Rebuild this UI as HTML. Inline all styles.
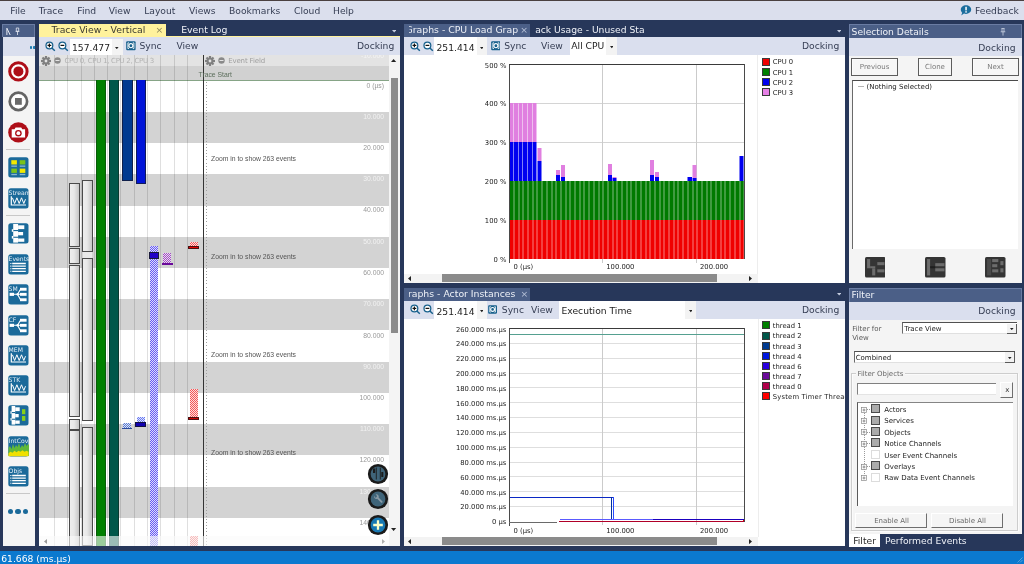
<!DOCTYPE html>
<html><head><meta charset="utf-8"><title>Trace</title>
<style>
*{margin:0;padding:0;box-sizing:border-box}
html,body{width:1024px;height:564px;overflow:hidden}
body{background:#27375a;position:relative;font-family:"DejaVu Sans","Liberation Sans",sans-serif;font-size:9.1px;color:#2e3440}
div,span,svg{position:absolute}
#root{left:0;top:0;width:1024px;height:564px;will-change:transform;overflow:hidden}
span{white-space:nowrap;line-height:1}
.t9{font-size:9.2px;color:#363e54}
.tw{font-size:9.2px;color:#eef1f7}
.t7{font-size:7px;color:#222}
.t7s{font-size:6.8px;color:#222}
.t7g{font-size:7px;color:#9a9a9a}
.ar{font-family:"Liberation Sans",sans-serif;font-size:6.8px;color:#555}
.tl{font-family:"Liberation Sans",sans-serif;font-size:6.8px;color:#999}
.tlw{font-family:"Liberation Sans",sans-serif;font-size:6.8px;color:#f2f2f2}
.tab{font-size:9.32px}
.btn{font-size:7px;color:#7a7a7a;text-align:center}
</style></head>
<body>
<div id="root">
<!-- p_top -->
<div style="left:0px;top:0px;width:1024px;height:1px;background:#4a4040;"></div>
<div style="left:0px;top:1px;width:1024px;height:18.5px;background:#dbdfed;"></div>
<span class="t9" style="left:10.3px;top:5.9px;">File</span>
<span class="t9" style="left:38.7px;top:5.9px;">Trace</span>
<span class="t9" style="left:77.3px;top:5.9px;">Find</span>
<span class="t9" style="left:108.7px;top:5.9px;">View</span>
<span class="t9" style="left:144.2px;top:5.9px;">Layout</span>
<span class="t9" style="left:189px;top:5.9px;">Views</span>
<span class="t9" style="left:229px;top:5.9px;">Bookmarks</span>
<span class="t9" style="left:294px;top:5.9px;">Cloud</span>
<span class="t9" style="left:333px;top:5.9px;">Help</span>
<svg style="left:960px;top:5px" width="12" height="11" viewBox="0 0 12 11"><path d="M6 0.3C8.9 0.3 11.2 2.2 11.2 4.6S8.9 8.9 6 8.9c-.7 0-1.4-.1-2-.3L1.2 10.4l1-2.6C1.300 7 .8 5.900 .8 4.600 .8 2.200 3.100 .3 6 .3z" fill="#1b6e9e"/><rect x="5.3" y="1.800" width="1.500" height="3.600" fill="#fff"/><rect x="5.300" y="6.200" width="1.500" height="1.400" fill="#fff"/></svg><span class="t9" style="left:975px;top:5.9px;">Feedback</span>
<div style="left:0px;top:550.5px;width:1024px;height:13.5px;background:#0b79cf;"></div>
<span class="tw" style="left:1.2px;top:553.9px;color:#fff">61.668 (ms.µs)</span>
<svg style="left:1016px;top:556px" width="7" height="7" viewBox="0 0 7 7"><path d="M6.500 1.500L1.500 6.500M6.500 4L4 6.500" stroke="#6aa8dc" stroke-width=".8"/></svg><!-- p_left -->
<div style="left:3px;top:24.3px;width:32.1px;height:522px;background:#f4f4f4;"></div>
<div style="left:3px;top:30px;width:32.1px;height:26px;background:#dadfee;"></div>
<div style="left:2.2px;top:24.3px;width:33px;height:13px;background:#4b5f87;border:1px solid #6a7ca3;border-bottom:none"></div>
<svg style="left:5.8px;top:27px" width="16" height="9" viewBox="0 0 16 9"><path d="M.9 8V1.200L4.200 8" stroke="#e6eaf3" stroke-width="1" fill="none"/><path d="M10.300 1h2.400v3.300h-2.400zM9.600 4.400h3.800M11.500 4.400V8" stroke="#e6eaf3" stroke-width=".8" fill="none"/></svg>
<div style="left:30px;top:46.3px;width:2.3px;height:2.3px;background:#1b7ab0;border-radius:0.8px"></div>
<div style="left:33.4px;top:46.3px;width:1.8px;height:2.3px;background:#1b7ab0;border-radius:0.8px 0 0 0.8px"></div>
<svg style="left:7px;top:60px" width="23" height="23" viewBox="0 0 23 23"><circle cx="11.400" cy="11.400" r="8.700" fill="#fff" stroke="#ae0f18" stroke-width="3"/><circle cx="11.400" cy="11.400" r="5" fill="#ae0f18"/></svg>
<svg style="left:7px;top:90px" width="23" height="23" viewBox="0 0 23 23"><circle cx="11.400" cy="11.400" r="8.700" fill="#fff" stroke="#646464" stroke-width="2.700"/><rect x="8" y="8" width="6.800" height="6.800" fill="#6a6a6a"/></svg>
<svg style="left:7px;top:120.500px" width="23" height="23" viewBox="0 0 23 23"><circle cx="11.400" cy="11.400" r="10.200" fill="#ae0f18"/><path d="M4.700 8.200h2.800l1.100-1.700h5.600l1.100 1.700h2.800v8.300h-13.400z" fill="#fff"/><circle cx="11.400" cy="12.200" r="3.300" fill="#ae0f18"/><circle cx="11.400" cy="12.200" r="1.900" fill="#fff"/></svg>
<div style="left:5.5px;top:149.2px;width:24.5px;height:0.8px;background:#c8c8c8;"></div>
<svg style="left:8px;top:157px" width="21" height="21" viewBox="0 0 21 21"><rect x="0.3" y="0.3" width="20.2" height="20.2" rx="2.5" fill="#1b6a9a"/><rect x="3.3" y="3.2" width="5.600" height="4.300" fill="#f2e800"/><rect x="3.3" y="8.5" width="5.600" height="1.300" fill="#8ab6d0"/><rect x="11.7" y="3.2" width="5.600" height="4.300" fill="#7ac21a"/><rect x="11.7" y="8.5" width="5.600" height="1.300" fill="#8ab6d0"/><rect x="3.3" y="11.6" width="5.600" height="4.300" fill="#7ac21a"/><rect x="3.3" y="16.9" width="5.600" height="1.300" fill="#8ab6d0"/><rect x="11.7" y="11.6" width="5.600" height="4.300" fill="#f2e800"/><rect x="11.7" y="16.9" width="5.600" height="1.300" fill="#8ab6d0"/></svg>
<svg style="left:8px;top:188px" width="21" height="21" viewBox="0 0 21 21"><rect x="0.3" y="0.3" width="20.2" height="20.2" rx="2.5" fill="#1b6a9a"/><path d="M3.300 8.200V17H18" stroke="#fff" stroke-width="1.200" fill="none"/><path d="M4.400 9.800l2.200 5.700 2.300-5.700 2.300 5.700 2.300-5.700 2.300 5.700 1.700-4.300" stroke="#fff" stroke-width="1" fill="none"/><text x="0.6" y="6.5" font-family="DejaVu Sans, sans-serif" font-size="6.1" fill="#e4eef6">Stream</text></svg>
<div style="left:5.5px;top:215.2px;width:24.5px;height:0.8px;background:#c8c8c8;"></div>
<svg style="left:8px;top:223px" width="21" height="21" viewBox="0 0 21 21"><rect x="0.3" y="0.3" width="20.2" height="20.2" rx="2.5" fill="#1b6a9a"/><rect x="5.200" y="1" width="4.900" height="18.600" fill="#fff"/><rect x="10.100" y="2.300" width="6.200" height="3.800" fill="#fff"/><rect x="10.100" y="9" width="5" height="3.300" fill="#fff"/><rect x="10.100" y="15.500" width="6.200" height="3.300" fill="#fff"/><rect x="5.200" y="7" width="4.900" height="1.100" fill="#1b6a9a"/><rect x="5.200" y="13.700" width="4.900" height="1.100" fill="#1b6a9a"/><rect x="3.800" y="6.200" width="1.400" height="2.600" fill="#fff"/><rect x="3.800" y="13" width="1.400" height="2.600" fill="#fff"/></svg>
<svg style="left:8px;top:253.5px" width="21" height="21" viewBox="0 0 21 21"><rect x="0.3" y="0.3" width="20.2" height="20.2" rx="2.5" fill="#1b6a9a"/><path d="M4.200 9.500h13.600M4.200 12.100h13.600M4.200 14.700h13.600M4.200 17.300h13.600" stroke="#fff" stroke-width="1.300"/><path d="M2.300 9.500h1.100M2.300 12.100h1.100M2.300 14.700h1.100M2.300 17.300h1.100" stroke="#fff" stroke-width="1.100"/><text x="0.6" y="6.5" font-family="DejaVu Sans, sans-serif" font-size="6.1" fill="#e4eef6">Events</text></svg>
<svg style="left:8px;top:284px" width="21" height="21" viewBox="0 0 21 21"><rect x="0.3" y="0.3" width="20.2" height="20.2" rx="2.5" fill="#1b6a9a"/><path d="M5.900 10.300h3.200M9.500 10.300L12.500 5.300M9.500 10.300h3M9.500 10.300L12.500 15.700" stroke="#fff" stroke-width="1.100" fill="none"/><circle cx="9.700" cy="10.300" r="1.300" fill="#fff"/><rect x="12" y="3.800" width="6.600" height="2.900" fill="#fff"/><rect x="12" y="8.900" width="6.600" height="2.900" fill="#fff"/><rect x="12" y="14.300" width="6.600" height="2.900" fill="#fff"/><rect x="1.600" y="8.800" width="4.400" height="3.100" fill="#fff"/><text x="0.6" y="6.5" font-family="DejaVu Sans, sans-serif" font-size="6.1" fill="#e4eef6">SM</text></svg>
<svg style="left:8px;top:314.5px" width="21" height="21" viewBox="0 0 21 21"><rect x="0.3" y="0.3" width="20.2" height="20.2" rx="2.5" fill="#1b6a9a"/><path d="M5.900 10.300h3.200M9.500 10.300L12.500 5.300M9.500 10.300h3M9.500 10.300L12.500 15.700" stroke="#fff" stroke-width="1.100" fill="none"/><circle cx="9.700" cy="10.300" r="1.300" fill="#fff"/><rect x="12" y="3.800" width="6.600" height="2.900" fill="#fff"/><rect x="12" y="8.900" width="6.600" height="2.900" fill="#fff"/><rect x="12" y="14.300" width="6.600" height="2.900" fill="#fff"/><rect x="1.600" y="8.800" width="4.400" height="3.100" fill="#fff"/><text x="0.6" y="6.5" font-family="DejaVu Sans, sans-serif" font-size="6.1" fill="#e4eef6">CF</text></svg>
<svg style="left:8px;top:344.5px" width="21" height="21" viewBox="0 0 21 21"><rect x="0.3" y="0.3" width="20.2" height="20.2" rx="2.5" fill="#1b6a9a"/><path d="M3.300 8.200V17H18" stroke="#fff" stroke-width="1.200" fill="none"/><path d="M4.400 9.800l2.200 5.700 2.300-5.700 2.300 5.700 2.300-5.700 2.300 5.700 1.700-4.300" stroke="#fff" stroke-width="1" fill="none"/><text x="0.6" y="6.5" font-family="DejaVu Sans, sans-serif" font-size="6.1" fill="#e4eef6">MEM</text></svg>
<svg style="left:8px;top:375px" width="21" height="21" viewBox="0 0 21 21"><rect x="0.3" y="0.3" width="20.2" height="20.2" rx="2.5" fill="#1b6a9a"/><path d="M3.300 8.200V17H18" stroke="#fff" stroke-width="1.200" fill="none"/><path d="M4.400 9.800l2.200 5.700 2.300-5.700 2.300 5.700 2.300-5.700 2.300 5.700 1.700-4.300" stroke="#fff" stroke-width="1" fill="none"/><text x="0.6" y="6.5" font-family="DejaVu Sans, sans-serif" font-size="6.1" fill="#e4eef6">STK</text></svg>
<svg style="left:8px;top:405px" width="21" height="21" viewBox="0 0 21 21"><rect x="0.3" y="0.3" width="20.2" height="20.2" rx="2.5" fill="#1b6a9a"/><rect x="3.600" y="1" width="3.600" height="18.600" fill="#fff"/><rect x="7.200" y="2.300" width="4.500" height="3.800" fill="#fff"/><rect x="7.200" y="9" width="3.500" height="3.300" fill="#fff"/><rect x="7.200" y="15.500" width="4.500" height="3.300" fill="#fff"/><rect x="3.600" y="7" width="3.600" height="1.100" fill="#1b6a9a"/><rect x="3.600" y="13.700" width="3.600" height="1.100" fill="#1b6a9a"/><rect x="2.500" y="6.200" width="1.100" height="2.600" fill="#fff"/><rect x="2.500" y="13" width="1.100" height="2.600" fill="#fff"/><rect x="14" y="4.200" width="3.300" height="5" fill="#8ad018"/><rect x="14" y="11" width="3.300" height="4.800" fill="#8ad018"/></svg>
<svg style="left:8px;top:435.5px" width="21" height="21" viewBox="0 0 21 21"><rect x="0.3" y="0.3" width="20.2" height="20.2" rx="2.5" fill="#1b6a9a"/><path d="M.5 20V12l1.500-2 1.500 3 1.500-5 1.500 4 1.500-3 1.500 2 1.500-4 1.500 5 1.500-3 1.500 2 1.500-4 1.500 3 1.500-2 1 1V20z" fill="#5fb83a"/><path d="M.5 20.200v-3l2-1.500 2 1 2-2 2 1.500 2-1.500 2 1 2-1.500 2 1.500 2-1 2 1v4.500z" fill="#f0e000"/><text x="0.6" y="6.5" font-family="DejaVu Sans, sans-serif" font-size="6.1" fill="#e4eef6">IntCov</text></svg>
<svg style="left:8px;top:466px" width="21" height="21" viewBox="0 0 21 21"><rect x="0.3" y="0.3" width="20.2" height="20.2" rx="2.5" fill="#1b6a9a"/><path d="M4.200 9.500h13.600M4.200 12.100h13.600M4.200 14.700h13.600M4.200 17.300h13.600" stroke="#fff" stroke-width="1.300"/><path d="M2.300 9.500h1.100M2.300 12.100h1.100M2.300 14.700h1.100M2.300 17.300h1.100" stroke="#fff" stroke-width="1.100"/><text x="0.6" y="6.5" font-family="DejaVu Sans, sans-serif" font-size="6.1" fill="#e4eef6">Objs</text></svg>
<div style="left:5.5px;top:493.2px;width:24.5px;height:0.8px;background:#c8c8c8;"></div>
<div style="left:7.9px;top:508.7px;width:5.2px;height:5.2px;background:#1b6a9a;border-radius:50%"></div>
<div style="left:15.4px;top:508.7px;width:5.2px;height:5.2px;background:#1b6a9a;border-radius:50%"></div>
<div style="left:22.9px;top:508.7px;width:5.2px;height:5.2px;background:#1b6a9a;border-radius:50%"></div>
<!-- p_trace -->
<div style="left:39px;top:24px;width:126.8px;height:12.5px;background:#fff29c;"></div>
<span class="t9 tab" style="left:51.5px;top:24.84px;color:#3a3a30">Trace View - Vertical</span>
<span class="t9" style="left:155.6px;top:24.9px;color:#8a845a;font-size:9.2px">×</span>
<span class="tw tab" style="left:181.2px;top:24.84px;">Event Log</span>
<svg style="left:392px;top:30.2px" width="4.4" height="2.6" viewBox="0 0 4.4 2.6"><path d="M0 0h4.4L2.2 2.6z" fill="#c5cde0"/></svg>
<div style="left:39px;top:36px;width:361.2px;height:1.1px;background:#fff29c;"></div>
<div style="left:39px;top:54px;width:350px;height:492.3px;background:#fff;overflow:hidden;"><div style="left:0px;top:0px;width:350px;height:12.3px;background:#e3e3e3;"></div>
<div style="left:0px;top:12.3px;width:350px;height:13.8px;background:#d1d1d1;"></div>
<div style="left:0px;top:26px;width:350px;height:466.3px;background:#fff;"></div>
<div style="left:0px;top:57.92px;width:350px;height:31.22px;background:#d3d3d3;"></div>
<div style="left:0px;top:120.36px;width:350px;height:31.22px;background:#d3d3d3;"></div>
<div style="left:0px;top:182.8px;width:350px;height:31.22px;background:#d3d3d3;"></div>
<div style="left:0px;top:245.24px;width:350px;height:31.22px;background:#d3d3d3;"></div>
<div style="left:0px;top:307.68px;width:350px;height:31.22px;background:#d3d3d3;"></div>
<div style="left:0px;top:370.12px;width:350px;height:31.22px;background:#d3d3d3;"></div>
<div style="left:0px;top:432.56px;width:350px;height:31.22px;background:#d3d3d3;"></div>
<div style="left:0px;top:26px;width:350px;height:1px;background:#86a486;"></div>
<span class="tlw" style="right:5px;top:-1px;color:#f4f4f4">-10.000</span><span class="tl" style="right:5px;top:29.1px">0 (µs)</span>
<span class="tlw" style="right:5px;top:60.1px">10.000</span>
<span class="tl" style="right:5px;top:91.1px">20.000</span>
<span class="tlw" style="right:5px;top:122.1px">30.000</span>
<span class="tl" style="right:5px;top:153.1px">40.000</span>
<span class="tlw" style="right:5px;top:185.1px">50.000</span>
<span class="tl" style="right:5px;top:216.1px">60.000</span>
<span class="tlw" style="right:5px;top:247.1px">70.000</span>
<span class="tl" style="right:5px;top:279.1px">80.000</span>
<span class="tlw" style="right:5px;top:310.1px">90.000</span>
<span class="tl" style="right:5px;top:341.1px">100.000</span>
<span class="tlw" style="right:5px;top:372.1px">110.000</span>
<span class="tl" style="right:5px;top:403.1px">120.000</span>
<span class="tlw" style="right:5px;top:435.1px">130.000</span>
<span class="tl" style="right:5px;top:466.1px">140.000</span>
<div style="left:15.0px;top:0px;width:0.9px;height:492.29999999999995px;background:rgba(0,0,0,0.125);"></div>
<div style="left:28.28px;top:0px;width:0.9px;height:492.29999999999995px;background:rgba(0,0,0,0.125);"></div>
<div style="left:41.56px;top:0px;width:0.9px;height:492.29999999999995px;background:rgba(0,0,0,0.125);"></div>
<div style="left:54.84px;top:0px;width:0.9px;height:492.29999999999995px;background:rgba(0,0,0,0.125);"></div>
<div style="left:68.12px;top:0px;width:0.9px;height:492.29999999999995px;background:rgba(0,0,0,0.125);"></div>
<div style="left:81.4px;top:0px;width:0.9px;height:492.29999999999995px;background:rgba(0,0,0,0.125);"></div>
<div style="left:94.68px;top:0px;width:0.9px;height:492.29999999999995px;background:rgba(0,0,0,0.125);"></div>
<div style="left:107.96px;top:0px;width:0.9px;height:492.29999999999995px;background:rgba(0,0,0,0.125);"></div>
<div style="left:121.24px;top:0px;width:0.9px;height:492.29999999999995px;background:rgba(0,0,0,0.125);"></div>
<div style="left:134.52px;top:0px;width:0.9px;height:492.29999999999995px;background:rgba(0,0,0,0.125);"></div>
<div style="left:147.8px;top:0px;width:0.9px;height:492.29999999999995px;background:rgba(0,0,0,0.125);"></div>
<div style="left:56.7px;top:26px;width:10.3px;height:466.29999999999995px;background:#008000;border-left:0.6px solid #0a5a0a;border-right:0.6px solid #0a5a0a"></div>
<div style="left:70.1px;top:26px;width:10.3px;height:466.29999999999995px;background:#00574a;border-left:0.6px solid #0a3a30;border-right:0.6px solid #0a3a30"></div>
<div style="left:83.3px;top:26px;width:10.6px;height:100.6px;background:#003a90;border:0.7px solid #10204a;border-top:none"></div>
<div style="left:96.5px;top:26px;width:10.4px;height:103.6px;background:#0014d8;border:0.7px solid #101a5a;border-top:none"></div>
<div style="left:30.2px;top:129px;width:10.5px;height:63.5px;background:linear-gradient(90deg,#eeeeee,#e8e8e8 45%,#c6c6c6);border:0.8px solid #4a4a4a;"></div>
<div style="left:30.2px;top:194.3px;width:10.5px;height:15.3px;background:linear-gradient(90deg,#eeeeee,#e8e8e8 45%,#c6c6c6);border:0.8px solid #4a4a4a;"></div>
<div style="left:30.2px;top:211px;width:10.5px;height:152.2px;background:linear-gradient(90deg,#eeeeee,#e8e8e8 45%,#c6c6c6);border:0.8px solid #4a4a4a;"></div>
<div style="left:30.2px;top:364.8px;width:10.5px;height:11.2px;background:linear-gradient(90deg,#eeeeee,#e8e8e8 45%,#c6c6c6);border:0.8px solid #4a4a4a;"></div>
<div style="left:30.2px;top:376px;width:10.5px;height:116.5px;background:linear-gradient(90deg,#eeeeee,#e8e8e8 45%,#c6c6c6);border:0.8px solid #4a4a4a;"></div>
<div style="left:43.3px;top:126px;width:10.5px;height:71.6px;background:linear-gradient(90deg,#eeeeee,#e8e8e8 45%,#c6c6c6);border:0.8px solid #4a4a4a;"></div>
<div style="left:43.3px;top:204.3px;width:10.5px;height:162.9px;background:linear-gradient(90deg,#eeeeee,#e8e8e8 45%,#c6c6c6);border:0.8px solid #4a4a4a;"></div>
<div style="left:43.3px;top:372.8px;width:10.5px;height:119.7px;background:linear-gradient(90deg,#eeeeee,#e8e8e8 45%,#c6c6c6);border:0.8px solid #4a4a4a;"></div>
<div style="left:43.8px;top:197.6px;width:9.5px;height:6.7px;background:#e9e9e9;"></div>
<div style="left:111px;top:192px;width:8px;height:300px;background:repeating-conic-gradient(#6a5cf0 0% 25%,#dcdcff 0% 50%) 0 0/2px 2px;"></div>
<div style="left:109.8px;top:198px;width:10.2px;height:6.8px;background:#2100c8;border:0.7px solid #1a1a3a"></div>
<div style="left:124px;top:199px;width:8px;height:10px;background:repeating-conic-gradient(#a050c0 0% 25%,#ecd8f4 0% 50%) 0 0/2px 2px;"></div>
<div style="left:122.9px;top:209px;width:10.7px;height:1.9px;background:#6a0a9a;"></div>
<div style="left:150.7px;top:188px;width:8px;height:4.2px;background:repeating-conic-gradient(#f05a5a 0% 25%,#ffdcdc 0% 50%) 0 0/2px 2px;"></div>
<div style="left:149.1px;top:192px;width:10.9px;height:3px;background:#e80000;border:0.6px solid #4a1010"></div>
<div style="left:97.5px;top:362.5px;width:8px;height:5px;background:repeating-conic-gradient(#6a7cf0 0% 25%,#dce0ff 0% 50%) 0 0/2px 2px;"></div>
<div style="left:96.2px;top:367.5px;width:10.4px;height:5.6px;background:#1000b0;border:0.6px solid #101040"></div>
<div style="left:84px;top:369px;width:8px;height:5.2px;background:repeating-conic-gradient(#5a7ad0 0% 25%,#dce4f8 0% 50%) 0 0/2px 2px;"></div>
<div style="left:82.8px;top:374.2px;width:10.6px;height:0.9px;background:#2a4a9a;"></div>
<div style="left:150.7px;top:335px;width:8px;height:27.7px;background:repeating-conic-gradient(#f05a5a 0% 25%,#ffdcdc 0% 50%) 0 0/2px 2px;"></div>
<div style="left:149.1px;top:362.6px;width:10.9px;height:3px;background:#c80000;border:0.6px solid #4a1010"></div>
<div style="left:150.7px;top:482px;width:8px;height:10px;background:repeating-conic-gradient(#f05a5a 0% 25%,#ffdcdc 0% 50%) 0 0/2px 2px;"></div>
<div style="left:164px;top:0px;width:0.9px;height:492.29999999999995px;background:#333;"></div>
<div style="left:167.1px;top:27.5px;width:0.9px;height:464.79999999999995px;background:repeating-linear-gradient(180deg,#a0a0a0 0 1px,transparent 1px 3.1px);"></div>
<div style="left:2.299999999999997px;top:1.7000000000000028px;width:10px;height:10px"><svg style="left:0px;top:0px" width="10" height="10" viewBox="-5 -5 10 10"><g fill="#808080"><rect x="-1.100" y="-5" width="2.200" height="3" transform="rotate(0)"/><rect x="-1.100" y="-5" width="2.200" height="3" transform="rotate(45)"/><rect x="-1.100" y="-5" width="2.200" height="3" transform="rotate(90)"/><rect x="-1.100" y="-5" width="2.200" height="3" transform="rotate(135)"/><rect x="-1.100" y="-5" width="2.200" height="3" transform="rotate(180)"/><rect x="-1.100" y="-5" width="2.200" height="3" transform="rotate(225)"/><rect x="-1.100" y="-5" width="2.200" height="3" transform="rotate(270)"/><rect x="-1.100" y="-5" width="2.200" height="3" transform="rotate(315)"/><circle r="3.500"/></g><circle r="1.400" fill="#e4e4e4"/></svg>
</div><div style="left:18.6px;top:6.600000000000001px;width:0;height:0"><svg style="left:-3.5px;top:-3.5px" width="7" height="7" viewBox="0 0 7 7"><circle cx="3.500" cy="3.500" r="3.200" fill="#8a8a8a"/><rect x="1.500" y="3" width="4" height="1" fill="#e4e4e4"/></svg>
</div><span class="t7g" style="left:25.400000000000006px;top:3.5px;color:#b2b2b2;letter-spacing:-0.29px">CPU 0, CPU 1, CPU 2, CPU 3</span><div style="left:166.2px;top:1.7000000000000028px;width:10px;height:10px"><svg style="left:0px;top:0px" width="10" height="10" viewBox="-5 -5 10 10"><g fill="#808080"><rect x="-1.100" y="-5" width="2.200" height="3" transform="rotate(0)"/><rect x="-1.100" y="-5" width="2.200" height="3" transform="rotate(45)"/><rect x="-1.100" y="-5" width="2.200" height="3" transform="rotate(90)"/><rect x="-1.100" y="-5" width="2.200" height="3" transform="rotate(135)"/><rect x="-1.100" y="-5" width="2.200" height="3" transform="rotate(180)"/><rect x="-1.100" y="-5" width="2.200" height="3" transform="rotate(225)"/><rect x="-1.100" y="-5" width="2.200" height="3" transform="rotate(270)"/><rect x="-1.100" y="-5" width="2.200" height="3" transform="rotate(315)"/><circle r="3.500"/></g><circle r="1.400" fill="#e4e4e4"/></svg>
</div><div style="left:182.3px;top:6.600000000000001px;width:0;height:0"><svg style="left:-3.5px;top:-3.5px" width="7" height="7" viewBox="0 0 7 7"><circle cx="3.500" cy="3.500" r="3.200" fill="#8a8a8a"/><rect x="1.500" y="3" width="4" height="1" fill="#e4e4e4"/></svg>
</div><span class="t7g" style="left:189.2px;top:3.5px;color:#a0a0a0;letter-spacing:-0.15px">Event Field</span><span class="ar" style="left:159.5px;top:18.1px;color:#5c6e5c">Trace Start</span><span class="ar" style="left:172px;top:102.1px">Zoom in to show 263 events</span>
<span class="ar" style="left:172px;top:200.1px">Zoom in to show 263 events</span>
<span class="ar" style="left:172px;top:298.1px">Zoom in to show 263 events</span>
<span class="ar" style="left:172px;top:396.1px">Zoom in to show 263 events</span>
<div style="left:0px;top:481.7px;width:350px;height:10.6px;background:rgba(250,250,250,0.62);"></div>
</div>
<svg style="left:43.8px;top:538.6px" width="3" height="5" viewBox="0 0 3 5"><path d="M3 0v5L0 2.5z" fill="#9a9a9a"/></svg>
<svg style="left:381.6px;top:538.6px" width="3" height="5" viewBox="0 0 3 5"><path d="M0 0v5L3 2.5z" fill="#b0b0b0"/></svg>
<div style="left:389px;top:54px;width:11.199999999999989px;height:492.3px;background:#f4f4f4;"></div>
<svg style="left:391.4px;top:59px" width="5.2" height="3" viewBox="0 0 5.2 3"><path d="M0 3h5.2L2.6 0z" fill="#222"/></svg>
<div style="left:391.1px;top:78px;width:6.9px;height:254.8px;background:#8b8b8b;"></div>
<svg style="left:391.4px;top:528px" width="5.2" height="3" viewBox="0 0 5.2 3"><path d="M0 0h5.2L2.6 3z" fill="#222"/></svg>
<div style="left:39px;top:37px;width:361.2px;height:17.7px;background:#dadfee;"></div>
<svg style="left:45.1px;top:41.2px" width="11" height="11" viewBox="0 0 11 11"><circle cx="4.400" cy="4.400" r="3.400" fill="#fff" stroke="#17608c" stroke-width="1.250"/><path d="M6.900 6.900L9.800 9.800" stroke="#17608c" stroke-width="1.450"/><path d="M2.500 4.400h3.800" stroke="#111" stroke-width="1.250"/><path d="M4.400 2.500v3.800" stroke="#111" stroke-width="1.250"/></svg>
<svg style="left:57.8px;top:41.2px" width="11" height="11" viewBox="0 0 11 11"><circle cx="4.400" cy="4.400" r="3.400" fill="#fff" stroke="#17608c" stroke-width="1.250"/><path d="M6.900 6.900L9.800 9.800" stroke="#17608c" stroke-width="1.450"/><path d="M2.500 4.400h3.800" stroke="#111" stroke-width="1.250"/></svg>
<div style="left:69.5px;top:39px;width:53px;height:15.6px;background:#fff;"></div>
<div style="left:112px;top:39px;width:10.5px;height:15.6px;background:#f3f3f3;"></div>
<span class="t9" style="left:72px;top:42.9px;color:#222">157.477</span>
<svg style="left:115.2px;top:46.8px" width="3.6" height="2.2" viewBox="0 0 3.6 2.2"><path d="M0 0h3.6L1.8 2.2z" fill="#222"/></svg>
<svg style="left:125.9px;top:41.3px" width="9.8" height="9.408" viewBox="0 0 10 9.600"><rect x=".2" y=".2" width="9.600" height="9.200" rx="1" fill="#17608c"/><circle cx="5" cy="4.800" r="2.100" fill="none" stroke="#fff" stroke-width="1.250"/><path d="M3.100 1.900H1.900V7.700H3.100M6.900 1.900H8.100V7.700H6.900" stroke="#fff" stroke-width=".85" fill="none"/></svg>
<span class="t9" style="left:139.5px;top:40.9px;">Sync</span>
<span class="t9" style="left:176.4px;top:40.9px;">View</span>
<span class="t9" style="left:357px;top:40.9px;">Docking</span>
<svg style="left:367px;top:463.1px" width="22" height="22" viewBox="-11 -11 22 22"><circle r="10.100" fill="#1a1a1a"/><circle r="7.400" fill="#3f6479"/><path d="M-1.700 -6.500v12M2.300 -6.500v12" stroke="#1c1c1c" stroke-width=".9"/><rect x="-5" y="-5.500" width="2.200" height="4.500" fill="#1c1c1c"/><rect x="3.300" y="-2" width="2" height="5" fill="#1c1c1c"/></svg>
<svg style="left:367px;top:488px" width="22" height="22" viewBox="-11 -11 22 22"><circle r="10.100" fill="#1a1a1a"/><circle r="7.400" fill="#3f6479"/><path d="M-3.800 -3.300a2.300 2.300 0 0 0 3 3L3.200 3.700a1 1 0 0 0 1.300-1.300L.6-1.600a2.300 2.300 0 0 0-3-3l1.500 1.500-.6 1.300-1.300.6z" fill="#8a9aa6"/></svg>
<svg style="left:367px;top:513.8px" width="22" height="22" viewBox="-11 -11 22 22"><circle r="10.100" fill="#1a1a1a"/><circle r="7.400" fill="#1878b2"/><path d="M-4.800 0h9.600M0 -4.800v9.600" stroke="#ffffc8" stroke-width="2.300"/></svg>
<!-- p_cpu -->
<div style="left:404px;top:24.3px;width:126px;height:12.5px;background:#4b5f87;"></div>
<div style="left:408.8px;top:24.3px;width:110px;height:12.5px;overflow:hidden"><span class="tw tab" style="left:-3.3px;top:0.54px">Graphs - CPU Load Grap</span></div>
<span class="tw" style="left:520.3px;top:24.9px;color:#b8c2d8;font-size:9.2px">×</span>
<span class="tw" style="left:535.2px;top:24.9px;">ack Usage - Unused Sta</span>
<svg style="left:836.7px;top:30.2px" width="4.4" height="2.6" viewBox="0 0 4.4 2.6"><path d="M0 0h4.4L2.2 2.6z" fill="#c5cde0"/></svg>
<div style="left:404px;top:36.8px;width:441.2px;height:246.5px;background:#fff;"></div>
<div style="left:404px;top:36.8px;width:441.2px;height:17.9px;background:#dadfee;"></div>
<svg style="left:410px;top:40.5px" width="11" height="11" viewBox="0 0 11 11"><circle cx="4.400" cy="4.400" r="3.400" fill="#fff" stroke="#17608c" stroke-width="1.250"/><path d="M6.900 6.900L9.800 9.800" stroke="#17608c" stroke-width="1.450"/><path d="M2.500 4.400h3.800" stroke="#111" stroke-width="1.250"/><path d="M4.400 2.500v3.800" stroke="#111" stroke-width="1.250"/></svg>
<svg style="left:422.7px;top:40.5px" width="11" height="11" viewBox="0 0 11 11"><circle cx="4.400" cy="4.400" r="3.400" fill="#fff" stroke="#17608c" stroke-width="1.250"/><path d="M6.900 6.900L9.800 9.800" stroke="#17608c" stroke-width="1.450"/><path d="M2.500 4.400h3.800" stroke="#111" stroke-width="1.250"/></svg>
<div style="left:434px;top:36.8px;width:53px;height:17.9px;background:#fff;"></div>
<div style="left:476.5px;top:36.8px;width:10.5px;height:17.9px;background:#f3f3f3;"></div>
<span class="t9" style="left:436.5px;top:42.9px;color:#222">251.414</span>
<svg style="left:479.7px;top:46.599999999999994px" width="3.6" height="2.2" viewBox="0 0 3.6 2.2"><path d="M0 0h3.6L1.8 2.2z" fill="#222"/></svg>
<span class="t9" style="left:802px;top:40.9px;">Docking</span>
<svg style="left:490.6px;top:41.3px" width="9.8" height="9.408" viewBox="0 0 10 9.600"><rect x=".2" y=".2" width="9.600" height="9.200" rx="1" fill="#17608c"/><circle cx="5" cy="4.800" r="2.100" fill="none" stroke="#fff" stroke-width="1.250"/><path d="M3.100 1.900H1.900V7.700H3.100M6.900 1.900H8.100V7.700H6.900" stroke="#fff" stroke-width=".85" fill="none"/></svg>
<span class="t9" style="left:504.2px;top:40.9px;">Sync</span>
<span class="t9" style="left:541px;top:40.9px;">View</span>
<div style="left:569.5px;top:36.8px;width:47.5px;height:17.9px;background:#fff;"></div>
<div style="left:605.5px;top:36.8px;width:11.5px;height:17.9px;background:#f3f3f3;"></div>
<span class="t9" style="left:571.3px;top:40.9px;color:#222">All CPU</span>
<svg style="left:609.5px;top:46.4px" width="3.6" height="2.2" viewBox="0 0 3.6 2.2"><path d="M0 0h3.6L1.8 2.2z" fill="#222"/></svg>
<div style="left:509.5px;top:219.59px;width:235.0px;height:0.9px;background:#d4d4d4;"></div>
<div style="left:509.5px;top:180.73px;width:235.0px;height:0.9px;background:#d4d4d4;"></div>
<div style="left:509.5px;top:141.87px;width:235.0px;height:0.9px;background:#d4d4d4;"></div>
<div style="left:509.5px;top:103.01px;width:235.0px;height:0.9px;background:#d4d4d4;"></div>
<div style="left:602.05px;top:64.6px;width:0.9px;height:198.29999999999998px;background:#cbcbcb;"></div>
<div style="left:695.75px;top:64.6px;width:0.9px;height:198.29999999999998px;background:#cbcbcb;"></div>
<div style="left:509.5px;top:64.6px;width:235.0px;height:194.3px;overflow:hidden"><div style="left:0px;top:155.44px;width:235.0px;height:38.86px;background:#f00000;"></div>
<div style="left:0px;top:116.08px;width:235.0px;height:39.36px;background:#007a00;"></div>
<div style="left:0px;top:77.72px;width:4.0px;height:38.86px;background:rgba(0,0,240,.5);"></div>
<div style="left:0px;top:77.72px;width:3.5px;height:38.86px;background:#0000f0;"></div>
<div style="left:0px;top:38.86px;width:4.0px;height:38.86px;background:rgba(224,127,224,.5);"></div>
<div style="left:0px;top:38.86px;width:3.5px;height:38.86px;background:#e07fe0;"></div>
<div style="left:4.0px;top:77.72px;width:4.7px;height:38.86px;background:rgba(0,0,240,.5);"></div>
<div style="left:4.5px;top:77.72px;width:3.7px;height:38.86px;background:#0000f0;"></div>
<div style="left:4.0px;top:38.86px;width:4.7px;height:38.86px;background:rgba(224,127,224,.5);"></div>
<div style="left:4.5px;top:38.86px;width:3.7px;height:38.86px;background:#e07fe0;"></div>
<div style="left:8.7px;top:77.72px;width:4.7px;height:38.86px;background:rgba(0,0,240,.5);"></div>
<div style="left:9.2px;top:77.72px;width:3.7px;height:38.86px;background:#0000f0;"></div>
<div style="left:8.7px;top:38.86px;width:4.7px;height:38.86px;background:rgba(224,127,224,.5);"></div>
<div style="left:9.2px;top:38.86px;width:3.7px;height:38.86px;background:#e07fe0;"></div>
<div style="left:13.4px;top:77.72px;width:4.7px;height:38.86px;background:rgba(0,0,240,.5);"></div>
<div style="left:13.9px;top:77.72px;width:3.7px;height:38.86px;background:#0000f0;"></div>
<div style="left:13.4px;top:38.86px;width:4.7px;height:38.86px;background:rgba(224,127,224,.5);"></div>
<div style="left:13.9px;top:38.86px;width:3.7px;height:38.86px;background:#e07fe0;"></div>
<div style="left:18.1px;top:77.72px;width:4.7px;height:38.86px;background:rgba(0,0,240,.5);"></div>
<div style="left:18.6px;top:77.72px;width:3.7px;height:38.86px;background:#0000f0;"></div>
<div style="left:18.1px;top:38.86px;width:4.7px;height:38.86px;background:rgba(224,127,224,.5);"></div>
<div style="left:18.6px;top:38.86px;width:3.7px;height:38.86px;background:#e07fe0;"></div>
<div style="left:22.8px;top:77.72px;width:4.7px;height:38.86px;background:rgba(0,0,240,.5);"></div>
<div style="left:23.3px;top:77.72px;width:3.7px;height:38.86px;background:#0000f0;"></div>
<div style="left:22.8px;top:38.86px;width:4.7px;height:38.86px;background:rgba(224,127,224,.5);"></div>
<div style="left:23.3px;top:38.86px;width:3.7px;height:38.86px;background:#e07fe0;"></div>
<div style="left:27.5px;top:95.98px;width:4.7px;height:20.6px;background:rgba(0,0,240,.5);"></div>
<div style="left:28.0px;top:95.98px;width:3.7px;height:20.6px;background:#0000f0;"></div>
<div style="left:27.5px;top:83.55px;width:4.7px;height:12.44px;background:rgba(224,127,224,.5);"></div>
<div style="left:28.0px;top:83.55px;width:3.7px;height:12.44px;background:#e07fe0;"></div>
<div style="left:46.3px;top:110.52px;width:4.7px;height:6.06px;background:rgba(0,0,240,.5);"></div>
<div style="left:46.8px;top:110.52px;width:3.7px;height:6.06px;background:#0000f0;"></div>
<div style="left:46.3px;top:104.92px;width:4.7px;height:5.6px;background:rgba(224,127,224,.5);"></div>
<div style="left:46.8px;top:104.92px;width:3.7px;height:5.6px;background:#e07fe0;"></div>
<div style="left:51.0px;top:112.5px;width:4.7px;height:4.08px;background:rgba(0,0,240,.5);"></div>
<div style="left:51.5px;top:112.5px;width:3.7px;height:4.08px;background:#0000f0;"></div>
<div style="left:51.0px;top:100.06px;width:4.7px;height:12.44px;background:rgba(224,127,224,.5);"></div>
<div style="left:51.5px;top:100.06px;width:3.7px;height:12.44px;background:#e07fe0;"></div>
<div style="left:98.0px;top:109.97px;width:4.7px;height:6.61px;background:rgba(0,0,240,.5);"></div>
<div style="left:98.5px;top:109.97px;width:3.7px;height:6.61px;background:#0000f0;"></div>
<div style="left:98.0px;top:99.09px;width:4.7px;height:10.88px;background:rgba(224,127,224,.5);"></div>
<div style="left:98.5px;top:99.09px;width:3.7px;height:10.88px;background:#e07fe0;"></div>
<div style="left:102.7px;top:113.47px;width:4.7px;height:3.11px;background:rgba(0,0,240,.5);"></div>
<div style="left:103.2px;top:113.47px;width:3.7px;height:3.11px;background:#0000f0;"></div>
<div style="left:102.7px;top:111.92px;width:4.7px;height:1.55px;background:rgba(224,127,224,.5);"></div>
<div style="left:103.2px;top:111.92px;width:3.7px;height:1.55px;background:#e07fe0;"></div>
<div style="left:140.3px;top:109.97px;width:4.7px;height:6.61px;background:rgba(0,0,240,.5);"></div>
<div style="left:140.8px;top:109.97px;width:3.7px;height:6.61px;background:#0000f0;"></div>
<div style="left:140.3px;top:95.6px;width:4.7px;height:14.38px;background:rgba(224,127,224,.5);"></div>
<div style="left:140.8px;top:95.6px;width:3.7px;height:14.38px;background:#e07fe0;"></div>
<div style="left:145.0px;top:112.31px;width:4.7px;height:4.27px;background:rgba(0,0,240,.5);"></div>
<div style="left:145.5px;top:112.31px;width:3.7px;height:4.27px;background:#0000f0;"></div>
<div style="left:145.0px;top:107.64px;width:4.7px;height:4.66px;background:rgba(224,127,224,.5);"></div>
<div style="left:145.5px;top:107.64px;width:3.7px;height:4.66px;background:#e07fe0;"></div>
<div style="left:177.9px;top:112.31px;width:4.7px;height:4.27px;background:rgba(0,0,240,.5);"></div>
<div style="left:178.4px;top:112.31px;width:3.7px;height:4.27px;background:#0000f0;"></div>
<div style="left:182.6px;top:113.47px;width:4.7px;height:3.11px;background:rgba(0,0,240,.5);"></div>
<div style="left:183.1px;top:113.47px;width:3.7px;height:3.11px;background:#0000f0;"></div>
<div style="left:182.6px;top:100.65px;width:4.7px;height:12.82px;background:rgba(224,127,224,.5);"></div>
<div style="left:183.1px;top:100.65px;width:3.7px;height:12.82px;background:#e07fe0;"></div>
<div style="left:229.6px;top:91.71px;width:4.7px;height:24.87px;background:rgba(0,0,240,.5);"></div>
<div style="left:230.1px;top:91.71px;width:3.7px;height:24.87px;background:#0000f0;"></div>
<div style="left:0px;top:116.58px;width:235.0px;height:77.72px;background:repeating-linear-gradient(90deg,rgba(255,255,255,.5) 0 1.0px,transparent 1.0px 4.7px);background-position:3.5px 0;"></div>
</div>
<div style="left:509.0px;top:64.1px;width:1px;height:198.79999999999998px;background:#4a4a4a;"></div>
<div style="left:509.0px;top:64.1px;width:236.0px;height:1px;background:#3a3a3a;"></div>
<div style="left:744.0px;top:64.1px;width:1px;height:194.79999999999998px;background:#4a4a4a;"></div>
<span class="t7s" style="right:517.6px;top:256.6px;">0 %</span>
<span class="t7s" style="right:517.6px;top:217.6px;">100 %</span>
<span class="t7s" style="right:517.6px;top:178.6px;">200 %</span>
<span class="t7s" style="right:517.6px;top:139.6px;">300 %</span>
<span class="t7s" style="right:517.6px;top:100.6px;">400 %</span>
<span class="t7s" style="right:517.6px;top:62.6px;">500 %</span>
<span class="t7s" style="left:513.6px;top:263.6px;">0 (µs)</span>
<span class="t7s" style="left:606.3px;top:263.6px;">100.000</span>
<span class="t7s" style="left:700px;top:263.6px;">200.000</span>
<div style="left:757.2px;top:54.7px;width:0.9px;height:219.2px;background:#ededed;"></div>
<div style="left:762px;top:57.6px;width:8.2px;height:8px;background:#f00000;border:0.7px solid #3a3a3a"></div>
<span class="t7s" style="left:772.8px;top:58.6px;">CPU 0</span>
<div style="left:762px;top:67.77px;width:8.2px;height:8px;background:#008000;border:0.7px solid #3a3a3a"></div>
<span class="t7s" style="left:772.8px;top:69.6px;">CPU 1</span>
<div style="left:762px;top:77.94px;width:8.2px;height:8px;background:#0000f0;border:0.7px solid #3a3a3a"></div>
<span class="t7s" style="left:772.8px;top:79.6px;">CPU 2</span>
<div style="left:762px;top:88.11px;width:8.2px;height:8px;background:#e680e6;border:0.7px solid #3a3a3a"></div>
<span class="t7s" style="left:772.8px;top:89.6px;">CPU 3</span>
<div style="left:404px;top:273.8px;width:353.5px;height:9.3px;background:#f3f3f3;"></div>
<div style="left:442.2px;top:274.1px;width:274.8px;height:8.4px;background:#8b8b8b;"></div>
<svg style="left:408.3px;top:275.84999999999997px" width="3" height="5.2" viewBox="0 0 3 5.2"><path d="M3 0v5.2L0 2.6z" fill="#222"/></svg>
<svg style="left:748.6px;top:275.84999999999997px" width="3" height="5.2" viewBox="0 0 3 5.2"><path d="M0 0v5.2L3 2.6z" fill="#222"/></svg>
<!-- p_actor -->
<div style="left:404px;top:287.8px;width:126px;height:12.8px;background:#4b5f87;"></div>
<div style="left:408.8px;top:287.8px;width:110px;height:12.8px;overflow:hidden"><span class="tw tab" style="left:-8.1px;top:1.04px">Graphs - Actor Instances</span></div>
<span class="tw" style="left:520.6px;top:288.9px;color:#b8c2d8;font-size:9.2px">×</span>
<svg style="left:836.9px;top:293.4px" width="4.4" height="2.6" viewBox="0 0 4.4 2.6"><path d="M0 0h4.4L2.2 2.6z" fill="#c5cde0"/></svg>
<div style="left:404px;top:300.6px;width:441.2px;height:245.4px;background:#fff;"></div>
<div style="left:404px;top:300.6px;width:441.2px;height:18.3px;background:#dadfee;"></div>
<svg style="left:410px;top:304.3px" width="11" height="11" viewBox="0 0 11 11"><circle cx="4.400" cy="4.400" r="3.400" fill="#fff" stroke="#17608c" stroke-width="1.250"/><path d="M6.900 6.900L9.800 9.800" stroke="#17608c" stroke-width="1.450"/><path d="M2.500 4.400h3.800" stroke="#111" stroke-width="1.250"/><path d="M4.400 2.500v3.800" stroke="#111" stroke-width="1.250"/></svg>
<svg style="left:422.7px;top:304.3px" width="11" height="11" viewBox="0 0 11 11"><circle cx="4.400" cy="4.400" r="3.400" fill="#fff" stroke="#17608c" stroke-width="1.250"/><path d="M6.900 6.900L9.800 9.800" stroke="#17608c" stroke-width="1.450"/><path d="M2.500 4.400h3.800" stroke="#111" stroke-width="1.250"/></svg>
<div style="left:434px;top:300.6px;width:53px;height:18.3px;background:#fff;"></div>
<div style="left:476.5px;top:300.6px;width:10.5px;height:18.3px;background:#f3f3f3;"></div>
<span class="t9" style="left:436.5px;top:306.9px;color:#222">251.414</span>
<svg style="left:479.7px;top:310.40000000000003px" width="3.6" height="2.2" viewBox="0 0 3.6 2.2"><path d="M0 0h3.6L1.8 2.2z" fill="#222"/></svg>
<span class="t9" style="left:802px;top:304.9px;">Docking</span>
<svg style="left:488.3px;top:305.40000000000003px" width="9.2" height="8.831999999999999" viewBox="0 0 10 9.600"><rect x=".2" y=".2" width="9.600" height="9.200" rx="1" fill="#17608c"/><circle cx="5" cy="4.800" r="2.100" fill="none" stroke="#fff" stroke-width="1.250"/><path d="M3.100 1.900H1.900V7.700H3.100M6.900 1.900H8.100V7.700H6.900" stroke="#fff" stroke-width=".85" fill="none"/></svg>
<span class="t9" style="left:501.8px;top:304.9px;">Sync</span>
<span class="t9" style="left:531px;top:304.9px;">View</span>
<div style="left:559.3px;top:300.6px;width:136.2px;height:18.3px;background:#fff;"></div>
<div style="left:685px;top:300.6px;width:10.5px;height:18.3px;background:#f3f3f3;"></div>
<span class="t9" style="left:561.5px;top:305.9px;color:#222">Execution Time</span>
<svg style="left:688.7px;top:310.40000000000003px" width="3.6" height="2.2" viewBox="0 0 3.6 2.2"><path d="M0 0h3.6L1.8 2.2z" fill="#222"/></svg>
<div style="left:509.5px;top:506.02px;width:235.0px;height:0.9px;background:#dedede;"></div>
<div style="left:509.5px;top:491.19px;width:235.0px;height:0.9px;background:#dedede;"></div>
<div style="left:509.5px;top:476.36px;width:235.0px;height:0.9px;background:#dedede;"></div>
<div style="left:509.5px;top:461.53px;width:235.0px;height:0.9px;background:#dedede;"></div>
<div style="left:509.5px;top:446.7px;width:235.0px;height:0.9px;background:#dedede;"></div>
<div style="left:509.5px;top:431.87px;width:235.0px;height:0.9px;background:#dedede;"></div>
<div style="left:509.5px;top:417.03px;width:235.0px;height:0.9px;background:#dedede;"></div>
<div style="left:509.5px;top:402.2px;width:235.0px;height:0.9px;background:#dedede;"></div>
<div style="left:509.5px;top:387.37px;width:235.0px;height:0.9px;background:#dedede;"></div>
<div style="left:509.5px;top:372.54px;width:235.0px;height:0.9px;background:#dedede;"></div>
<div style="left:509.5px;top:357.71px;width:235.0px;height:0.9px;background:#dedede;"></div>
<div style="left:509.5px;top:342.88px;width:235.0px;height:0.9px;background:#dedede;"></div>
<div style="left:602.05px;top:328.5px;width:0.9px;height:196.79999999999995px;background:#cbcbcb;"></div>
<div style="left:695.75px;top:328.5px;width:0.9px;height:196.79999999999995px;background:#cbcbcb;"></div>
<div style="left:509.5px;top:334.3px;width:235.0px;height:0.9px;background:#55a090;"></div>
<div style="left:509.5px;top:497px;width:103.6px;height:1.1px;background:#0a28c4;"></div>
<div style="left:610.9px;top:497.1px;width:0.8px;height:23px;background:#0030a0;"></div>
<div style="left:612.9px;top:497.1px;width:0.8px;height:23px;background:#2a4aff;"></div>
<div style="left:560px;top:518.9px;width:94px;height:0.8px;background:#5a5aff;"></div>
<div style="left:653px;top:518.6px;width:91.5px;height:1.4px;background:#1a00c0;"></div>
<div style="left:559px;top:520.7px;width:185.5px;height:1.0px;background:#b00028;"></div>
<div style="left:742.5px;top:519.6px;width:2px;height:1.2px;background:#e00000;"></div>
<div style="left:509.0px;top:328.0px;width:1px;height:197.49999999999994px;background:#4a4a4a;"></div>
<div style="left:509.0px;top:328.0px;width:236.0px;height:1px;background:#3a3a3a;"></div>
<div style="left:744.0px;top:328.0px;width:1px;height:193.79999999999995px;background:#4a4a4a;"></div>
<div style="left:509.0px;top:521.5999999999999px;width:48px;height:0.8px;background:#6a6a6a;"></div>
<span class="t7s" style="right:517.6px;top:518.6px;">0 µs</span>
<span class="t7s" style="right:517.6px;top:503.6px;">20.000 ms.µs</span>
<span class="t7s" style="right:517.6px;top:489.6px;">40.000 ms.µs</span>
<span class="t7s" style="right:517.6px;top:474.6px;">60.000 ms.µs</span>
<span class="t7s" style="right:517.6px;top:459.6px;">80.000 ms.µs</span>
<span class="t7s" style="right:517.6px;top:444.6px;">100.000 ms.µs</span>
<span class="t7s" style="right:517.6px;top:429.6px;">120.000 ms.µs</span>
<span class="t7s" style="right:517.6px;top:414.6px;">140.000 ms.µs</span>
<span class="t7s" style="right:517.6px;top:400.6px;">160.000 ms.µs</span>
<span class="t7s" style="right:517.6px;top:385.6px;">180.000 ms.µs</span>
<span class="t7s" style="right:517.6px;top:370.6px;">200.000 ms.µs</span>
<span class="t7s" style="right:517.6px;top:355.6px;">220.000 ms.µs</span>
<span class="t7s" style="right:517.6px;top:340.6px;">240.000 ms.µs</span>
<span class="t7s" style="right:517.6px;top:326.6px;">260.000 ms.µs</span>
<span class="t7s" style="left:513.6px;top:527.6px;">0 (µs)</span>
<span class="t7s" style="left:606.3px;top:527.6px;">100.000</span>
<span class="t7s" style="left:700px;top:527.6px;">200.000</span>
<div style="left:757.6px;top:318.5px;width:0.9px;height:218.1px;background:#ededed;"></div>
<div style="left:762px;top:321.4px;width:8.2px;height:8px;background:#008000;border:0.7px solid #3a3a3a"></div>
<span class="t7s" style="left:772.8px;top:322.6px;">thread 1</span>
<div style="left:762px;top:331.52px;width:8.2px;height:8px;background:#00574a;border:0.7px solid #3a3a3a"></div>
<span class="t7s" style="left:772.8px;top:332.6px;">thread 2</span>
<div style="left:762px;top:341.64px;width:8.2px;height:8px;background:#003a90;border:0.7px solid #3a3a3a"></div>
<span class="t7s" style="left:772.8px;top:343.6px;">thread 3</span>
<div style="left:762px;top:351.76px;width:8.2px;height:8px;background:#0018e0;border:0.7px solid #3a3a3a"></div>
<span class="t7s" style="left:772.8px;top:353.6px;">thread 4</span>
<div style="left:762px;top:361.88px;width:8.2px;height:8px;background:#2a00e0;border:0.7px solid #3a3a3a"></div>
<span class="t7s" style="left:772.8px;top:363.6px;">thread 6</span>
<div style="left:762px;top:372.0px;width:8.2px;height:8px;background:#6a0a9a;border:0.7px solid #3a3a3a"></div>
<span class="t7s" style="left:772.8px;top:373.6px;">thread 7</span>
<div style="left:762px;top:382.12px;width:8.2px;height:8px;background:#b0004a;border:0.7px solid #3a3a3a"></div>
<span class="t7s" style="left:772.8px;top:383.6px;">thread 0</span>
<div style="left:762px;top:392.24px;width:8.2px;height:8px;background:#ff0000;border:0.7px solid #3a3a3a"></div>
<span class="t7s" style="left:772.8px;top:393.6px;letter-spacing:0.18px">System Timer Thread</span>
<div style="left:845.2px;top:318px;width:3.8px;height:120px;background:#27375a;"></div>
<div style="left:404px;top:536.6px;width:353.5px;height:9.4px;background:#f3f3f3;"></div>
<div style="left:442.2px;top:536.9px;width:274.8px;height:8.5px;background:#8b8b8b;"></div>
<svg style="left:408.3px;top:538.7px" width="3" height="5.2" viewBox="0 0 3 5.2"><path d="M3 0v5.2L0 2.6z" fill="#222"/></svg>
<svg style="left:748.6px;top:538.7px" width="3" height="5.2" viewBox="0 0 3 5.2"><path d="M0 0v5.2L3 2.6z" fill="#222"/></svg>
<!-- p_seldet -->
<div style="left:849px;top:30px;width:172.70000000000005px;height:253px;background:#f4f4f4;"></div>
<div style="left:849px;top:24.3px;width:172.70000000000005px;height:14px;background:#4b5f87;border:1px solid #6a7ca3;border-bottom:none"></div>
<span class="tw" style="left:851.6px;top:26.9px;">Selection Details</span>
<svg style="left:1000.4px;top:27.6px" width="6" height="8" viewBox="0 0 6 8"><path d="M1.500 .5h3M2 .5v3.300M4 .5v3.300M.7 3.800h4.600M3 3.800V7.600" stroke="#d4dbe9" stroke-width=".75" fill="none"/></svg>
<div style="left:849px;top:38.3px;width:172.70000000000005px;height:17.3px;background:#dadfee;"></div>
<span class="t9" style="left:978.3px;top:42.9px;">Docking</span>
<div style="left:849px;top:55.6px;width:172.70000000000005px;height:227.4px;background:#f4f4f4;"></div>
<div style="left:851.2px;top:58.2px;width:46.8px;height:17.6px;background:#f6f6f6;border:1px solid #5c5c5c;box-shadow:inset 0.6px 0.6px 0 #fff;"><span class="btn" style="left:0;width:44.8px;top:5.3px">Previous</span></div>
<div style="left:918px;top:58.2px;width:34px;height:17.6px;background:#f6f6f6;border:1px solid #5c5c5c;box-shadow:inset 0.6px 0.6px 0 #fff;"><span class="btn" style="left:0;width:32px;top:5.3px">Clone</span></div>
<div style="left:972px;top:58.2px;width:47px;height:17.6px;background:#f6f6f6;border:1px solid #5c5c5c;box-shadow:inset 0.6px 0.6px 0 #fff;"><span class="btn" style="left:0;width:45px;top:5.3px">Next</span></div>
<div style="left:852px;top:79.8px;width:166px;height:169.4px;background:#fff;border-top:1px solid #4a4a4a;border-left:1px solid #6a6a6a;"></div>
<div style="left:858px;top:86.3px;width:5.5px;height:1px;background:#b4b4b4;"></div>
<span class="t7" style="left:866.5px;top:83.5px;">(Nothing Selected)</span>
<svg style="left:864.7px;top:257.2px" width="20.5" height="20.5" viewBox="0 0 20 20"><rect width="20" height="20" rx="1.500" fill="#343434"/><rect x="2" y="2" width="3" height="9" fill="#6c6c6c"/><rect x="7" y="11" width="3" height="7" fill="#6c6c6c"/><rect x="5" y="9" width="5" height="2" fill="#6c6c6c"/><rect x="12" y="5" width="7" height="3" fill="#6c6c6c"/><rect x="12" y="12" width="7" height="3" fill="#6c6c6c"/></svg>
<svg style="left:925px;top:257.2px" width="20.5" height="20.5" viewBox="0 0 20 20"><rect width="20" height="20" rx="1.500" fill="#343434"/><rect x="2" y="2" width="3" height="16" fill="#6c6c6c"/><rect x="5" y="9" width="5" height="2" fill="#1e1e1e"/><rect x="10" y="6" width="9" height="3" fill="#6c6c6c"/><rect x="10" y="11" width="9" height="3" fill="#6c6c6c"/></svg>
<svg style="left:985.2px;top:257.2px" width="20.5" height="20.5" viewBox="0 0 20 20"><rect width="20" height="20" rx="1.500" fill="#343434"/><rect x="2" y="2" width="4" height="16" fill="#4a4a4a"/><rect x="7" y="2" width="6" height="3" fill="#6c6c6c"/><rect x="7" y="7" width="5" height="3" fill="#6c6c6c"/><rect x="7" y="12" width="6" height="3" fill="#6c6c6c"/><rect x="15" y="4" width="3" height="4" fill="#6c6c6c"/><rect x="15" y="11" width="3" height="4" fill="#6c6c6c"/></svg>
<!-- p_filt -->
<div style="left:849px;top:295px;width:172.70000000000005px;height:240px;background:#f4f4f4;"></div>
<div style="left:849px;top:287.6px;width:172.70000000000005px;height:14px;background:#4b5f87;border:1px solid #6a7ca3;border-bottom:none"></div>
<span class="tw" style="left:851.6px;top:289.9px;">Filter</span>
<div style="left:849px;top:301.6px;width:172.70000000000005px;height:18px;background:#dadfee;"></div>
<span class="t9" style="left:978.3px;top:305.9px;">Docking</span>
<div style="left:849px;top:319.6px;width:172.70000000000005px;height:214.8px;background:#f4f4f4;"></div>
<span class="t7" style="left:852.2px;top:325.5px;color:#5a5a5a">Filter for</span>
<span class="t7" style="left:852.2px;top:334.5px;color:#5a5a5a">View</span>
<div style="left:902.2px;top:322.2px;width:115.3px;height:11.9px;background:#fff;border-top:1.25px solid #505050;border-left:1.1px solid #6a6a6a;border-bottom:0.6px solid #e0e0e0;"></div>
<div style="left:1007.3px;top:323.5px;width:10px;height:10.4px;background:#f2f2f2;border-right:1px solid #5a5a5a;border-bottom:1px solid #5a5a5a;"></div>
<svg style="left:1010.3px;top:327.7px" width="3.6" height="2.2" viewBox="0 0 3.6 2.2"><path d="M0 0h3.6L1.8 2.2z" fill="#222"/></svg>
<span class="t7" style="left:904.2px;top:325.5px;">Trace View</span>
<div style="left:853.7px;top:351.09999999999997px;width:161.8px;height:11.9px;background:#fff;border-top:1.25px solid #505050;border-left:1.1px solid #6a6a6a;border-bottom:0.6px solid #e0e0e0;"></div>
<div style="left:1005.3px;top:352.4px;width:10px;height:10.4px;background:#f2f2f2;border-right:1px solid #5a5a5a;border-bottom:1px solid #5a5a5a;"></div>
<svg style="left:1008.3px;top:356.59999999999997px" width="3.6" height="2.2" viewBox="0 0 3.6 2.2"><path d="M0 0h3.6L1.8 2.2z" fill="#222"/></svg>
<span class="t7" style="left:855.7px;top:354.5px;">Combined</span>
<div style="left:851.1px;top:373.2px;width:166.6px;height:158.2px;border:0.9px solid #cdcdcd;box-shadow:inset 0.6px 0.6px 0 #fff,0.6px 0.6px 0 #fff;"></div>
<div style="left:856px;top:370px;width:49px;height:8px;background:#f4f4f4;"></div>
<span class="t7" style="left:857.4px;top:370.5px;color:#6a6a6a">Filter Objects</span>
<div style="left:857.4px;top:383.2px;width:138.6px;height:11.4px;background:#fff;border-top:1.6px solid #808080;border-left:1.3px solid #808080;border-bottom:0.6px solid #e4e4e4"></div>
<div style="left:1000.4px;top:382px;width:12.8px;height:16.3px;background:#f5f5f5;border-right:1px solid #6e6e6e;border-bottom:1px solid #6e6e6e;border-top:0.6px solid #fff;border-left:0.6px solid #fff;"><span class="btn" style="left:0;width:11.8px;top:3.9px;color:#333">x</span></div>
<div style="left:857.3px;top:402.2px;width:155.5px;height:103.8px;background:#fff;border-top:1.2px solid #858585;border-left:1.2px solid #5a5a5a;"></div>
<div style="left:864px;top:409px;width:0.8px;height:69.5px;background:repeating-linear-gradient(180deg,#9a9a9a 0 1px,transparent 1px 2px)"></div>
<div style="left:864.5px;top:409.1px;width:6.2px;height:0.8px;background:repeating-linear-gradient(90deg,#9a9a9a 0 1px,transparent 1px 2px)"></div>
<svg style="left:861.4px;top:406.5px" width="6" height="6" viewBox="0 0 6 6"><rect x=".4" y=".4" width="5.200" height="5.200" fill="#fff" stroke="#8a8a8a" stroke-width=".7"/><path d="M1.500 3h3M3 1.500v3" stroke="#444" stroke-width=".55"/></svg>
<div style="left:871.1px;top:404.2px;width:8.7px;height:9px;background:#ababab;border:1px solid #4a4a4a"></div>
<span class="t7" style="left:884.3px;top:406.5px;">Actors</span>
<div style="left:864.5px;top:420.5px;width:6.2px;height:0.8px;background:repeating-linear-gradient(90deg,#9a9a9a 0 1px,transparent 1px 2px)"></div>
<svg style="left:861.4px;top:417.9px" width="6" height="6" viewBox="0 0 6 6"><rect x=".4" y=".4" width="5.200" height="5.200" fill="#fff" stroke="#8a8a8a" stroke-width=".7"/><path d="M1.500 3h3M3 1.500v3" stroke="#444" stroke-width=".55"/></svg>
<div style="left:871.1px;top:415.6px;width:8.7px;height:9px;background:#ababab;border:1px solid #4a4a4a"></div>
<span class="t7" style="left:884.3px;top:417.5px;">Services</span>
<div style="left:864.5px;top:431.9px;width:6.2px;height:0.8px;background:repeating-linear-gradient(90deg,#9a9a9a 0 1px,transparent 1px 2px)"></div>
<svg style="left:861.4px;top:429.3px" width="6" height="6" viewBox="0 0 6 6"><rect x=".4" y=".4" width="5.200" height="5.200" fill="#fff" stroke="#8a8a8a" stroke-width=".7"/><path d="M1.500 3h3M3 1.500v3" stroke="#444" stroke-width=".55"/></svg>
<div style="left:871.1px;top:427.0px;width:8.7px;height:9px;background:#ababab;border:1px solid #4a4a4a"></div>
<span class="t7" style="left:884.3px;top:429.5px;">Objects</span>
<div style="left:864.5px;top:443.3px;width:6.2px;height:0.8px;background:repeating-linear-gradient(90deg,#9a9a9a 0 1px,transparent 1px 2px)"></div>
<svg style="left:861.4px;top:440.7px" width="6" height="6" viewBox="0 0 6 6"><rect x=".4" y=".4" width="5.200" height="5.200" fill="#fff" stroke="#8a8a8a" stroke-width=".7"/><path d="M1.500 3h3M3 1.500v3" stroke="#444" stroke-width=".55"/></svg>
<div style="left:871.1px;top:438.4px;width:8.7px;height:9px;background:#ababab;border:1px solid #4a4a4a"></div>
<span class="t7" style="left:884.3px;top:440.5px;">Notice Channels</span>
<div style="left:864.5px;top:454.7px;width:6.2px;height:0.8px;background:repeating-linear-gradient(90deg,#9a9a9a 0 1px,transparent 1px 2px)"></div>
<div style="left:871.1px;top:449.8px;width:8.7px;height:9px;background:#fff;border:0.8px solid #dcdcdc"></div>
<span class="t7" style="left:884.3px;top:452.5px;">User Event Channels</span>
<div style="left:864.5px;top:466.1px;width:6.2px;height:0.8px;background:repeating-linear-gradient(90deg,#9a9a9a 0 1px,transparent 1px 2px)"></div>
<svg style="left:861.4px;top:463.5px" width="6" height="6" viewBox="0 0 6 6"><rect x=".4" y=".4" width="5.200" height="5.200" fill="#fff" stroke="#8a8a8a" stroke-width=".7"/><path d="M1.500 3h3M3 1.500v3" stroke="#444" stroke-width=".55"/></svg>
<div style="left:871.1px;top:461.2px;width:8.7px;height:9px;background:#ababab;border:1px solid #4a4a4a"></div>
<span class="t7" style="left:884.3px;top:463.5px;">Overlays</span>
<div style="left:864.5px;top:477.5px;width:6.2px;height:0.8px;background:repeating-linear-gradient(90deg,#9a9a9a 0 1px,transparent 1px 2px)"></div>
<svg style="left:861.4px;top:474.9px" width="6" height="6" viewBox="0 0 6 6"><rect x=".4" y=".4" width="5.200" height="5.200" fill="#fff" stroke="#8a8a8a" stroke-width=".7"/><path d="M1.500 3h3M3 1.500v3" stroke="#444" stroke-width=".55"/></svg>
<div style="left:871.1px;top:472.6px;width:8.7px;height:9px;background:#fff;border:0.8px solid #dcdcdc"></div>
<span class="t7" style="left:884.3px;top:474.5px;">Raw Data Event Channels</span>
<div style="left:855px;top:512.7px;width:72px;height:15.8px;background:#f5f5f5;border-right:1px solid #6e6e6e;border-bottom:1px solid #6e6e6e;border-top:0.6px solid #fff;border-left:0.6px solid #fff;"><span class="btn" style="left:0;width:71px;top:4.2px;color:#6a6a6a">Enable All</span></div>
<div style="left:931px;top:512.7px;width:72px;height:15.8px;background:#f5f5f5;border-right:1px solid #6e6e6e;border-bottom:1px solid #6e6e6e;border-top:0.6px solid #fff;border-left:0.6px solid #fff;"><span class="btn" style="left:0;width:71px;top:4.2px;color:#6a6a6a">Disable All</span></div>
<div style="left:849px;top:534.4px;width:172.70000000000005px;height:12.2px;background:#27375a;"></div>
<div style="left:849.3px;top:534.4px;width:30.8px;height:12.2px;background:#fff;"></div>
<span class="t9" style="left:853.2px;top:535.9px;color:#2a2a2a">Filter</span>
<span class="tw" style="left:885px;top:535.9px;">Performed Events</span>
</div>
</body></html>
